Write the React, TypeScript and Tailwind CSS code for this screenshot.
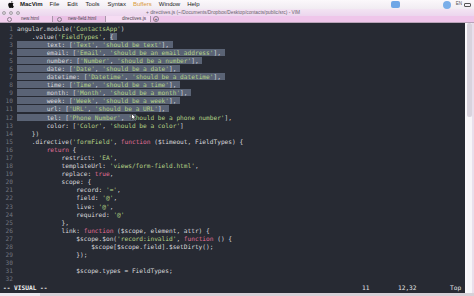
import React from "react";

const LINES: string[] = [
  "angular.module('ContactsApp')",
  "    .value('FieldTypes', {",
  "        text: ['Text', 'should be text'],",
  "        email: ['Email', 'should be an email address'],",
  "        number: ['Number', 'should be a number'],",
  "        date: ['Date', 'should be a date'],",
  "        datetime: ['Datetime', 'should be a datetime'],",
  "        time: ['Time', 'should be a time'],",
  "        month: ['Month', 'should be a month'],",
  "        week: ['Week', 'should be a week'],",
  "        url: ['URL', 'should be a URL'],",
  "        tel: ['Phone Number', 'should be a phone number'],",
  "        color: ['Color', 'should be a color']",
  "    })",
  "    .directive('formField', function ($timeout, FieldTypes) {",
  "        return {",
  "            restrict: 'EA',",
  "            templateUrl: 'views/form-field.html',",
  "            replace: true,",
  "            scope: {",
  "                record: '=',",
  "                field: '@',",
  "                live: '@',",
  "                required: '@'",
  "            },",
  "            link: function ($scope, element, attr) {",
  "                $scope.$on('record:invalid', function () {",
  "                    $scope[$scope.field].$setDirty();",
  "                });",
  "",
  "                $scope.types = FieldTypes;",
  "",
];

const DEF = "#d9d9dc";
const STR = "#b6d487";
const KW = "#e06f98";

function selFor(i: number, len: number): [number, number] | null {
  if (i === 1) return [25, 26];
  if (i >= 2 && i <= 10) return [0, len];
  if (i === 11) return [0, 31];
  return null;
}

function colorize(line: string): string[] {
  const colors: string[] = [];
  const re = /('[^']*'|\bfunction\b|\breturn\b|\btrue\b)/g;
  let last = 0;
  let m: RegExpExecArray | null;
  while ((m = re.exec(line))) {
    for (let k = last; k < m.index; k++) colors.push(DEF);
    const c = m[0].startsWith("'") ? STR : KW;
    for (let k = 0; k < m[0].length; k++) colors.push(c);
    last = m.index + m[0].length;
  }
  for (let k = last; k < line.length; k++) colors.push(DEF);
  return colors;
}

function CodeLine({ text, idx }: { text: string; idx: number }) {
  const sel = selFor(idx, text.length);
  let padded = text;
  if (sel && padded.length <= sel[1]) padded = padded.padEnd(sel[1] + 1, " ");
  const colors = colorize(text);
  const groups: { t: string; c: string; s: boolean }[] = [];
  for (let k = 0; k < padded.length; k++) {
    const c = colors[k] ?? DEF;
    const s = !!sel && k >= sel[0] && k <= sel[1];
    const g = groups[groups.length - 1];
    if (g && g.c === c && g.s === s) g.t += padded[k];
    else groups.push({ t: padded[k], c, s });
  }
  return (
    <div className="flex h-[8.1px] leading-[8.1px] whitespace-pre">
      <span className="w-[13px] text-right text-[#70757f]">{idx + 1}</span>
      <span className="w-[4px]" />
      <span>
        {groups.map((g, k) => (
          <span
            key={k}
            style={{ color: g.c }}
            className={g.s ? "bg-[#5a6375]" : ""}
          >
            {g.t}
          </span>
        ))}
      </span>
    </div>
  );
}

function Apple() {
  return (
    <svg width="6" height="7" viewBox="0 0 12 14">
      <path
        d="M9.8 7.4c0-1.8 1.5-2.6 1.5-2.7-.8-1.2-2.1-1.4-2.5-1.4-1.1-.1-2.1.6-2.6.6-.6 0-1.4-.6-2.3-.6C2.7 3.3 1.6 4 1 5.1c-1.3 2.2-.3 5.5.9 7.3.6.9 1.3 1.9 2.2 1.8.9 0 1.2-.6 2.3-.6s1.4.6 2.3.6c1 0 1.6-.9 2.1-1.8.7-1 1-2 1-2-.1 0-2-.8-2-3zM8 2.1c.5-.6.8-1.4.7-2.1-.7 0-1.5.5-2 1.1-.4.5-.8 1.3-.7 2.1.8 0 1.5-.4 2-1.1z"
        fill="#111"
      />
    </svg>
  );
}

function TabClose() {
  return (
    <span className="inline-block w-[5px] h-[5px] rounded-full border border-[#8a7f8c]" />
  );
}

export default function App() {
  const sans = { fontFamily: '"Liberation Sans", Arial, sans-serif' };
  return (
    <div className="w-[474px] h-[296px] overflow-hidden flex flex-col bg-[#f3eef4]" style={sans}>
      {/* menu bar */}
      <div className="h-[9px] flex items-center bg-gradient-to-b from-[#fbf8fb] to-[#f1ecf2] text-[6px] text-[#1a1a1a] pl-[8px]">
        <Apple />
        <span className="ml-[6px] font-bold">MacVim</span>
        <span className="ml-[7px]">File</span>
        <span className="ml-[8px]">Edit</span>
        <span className="ml-[8px]">Tools</span>
        <span className="ml-[8px]">Syntax</span>
        <span className="ml-[7px] text-[#d99a3a]">Buffers</span>
        <span className="ml-[7px]">Window</span>
        <span className="ml-[7px]">Help</span>
        <span className="flex-1" />
        <span className="w-[9px] h-[7px] rounded-[2px] bg-[#6fa6e6] mr-[43px]" />
        <span className="w-[8px] h-[8px] rounded-full bg-[#7aaee9] mr-[5px]" />
        <span className="text-[4.5px] text-[#555]">EN</span>
        <span className="ml-[2px] mr-[3px] w-[7px] h-[4px] border border-[#555] rounded-[1px]" />
      </div>
      {/* title bar */}
      <div className="h-[7px] flex items-center bg-gradient-to-b from-[#f3e4f3] to-[#ecd6ee] relative">
        <div className="flex gap-[3px] pl-[2px]">
          <span className="w-[4px] h-[4px] rounded-full bg-[#d8d0d8] border border-[#a8a0aa]" />
          <span className="w-[4px] h-[4px] rounded-full bg-[#d8d0d8] border border-[#a8a0aa]" />
          <span className="w-[4px] h-[4px] rounded-full bg-[#d8d0d8] border border-[#a8a0aa]" />
        </div>
        <span className="ml-[126px] text-[4.8px] text-[#6a626c] whitespace-nowrap">
          + directives.js (~/Documents/Dropbox/Desktop/contacts/public/src) - VIM
        </span>
      </div>
      {/* tab bar */}
      <div className="h-[7px] flex items-stretch bg-[#efc6ea] text-[4.6px] text-[#4a3f4c] border-b border-[#b9a3b8]">
        <div className="w-[53px] flex items-center pl-[7px] gap-[9px] border-r border-[#a895a8] bg-[#f2cfee]">
          <TabClose />
          <span>new.html</span>
        </div>
        <div className="w-[53px] flex items-center pl-[4px] gap-[6px] border-r border-[#a895a8] bg-[#eabfe5]">
          <TabClose />
          <span>new-field.html</span>
        </div>
        <div className="w-[45px] flex items-center pl-[3px] gap-[8px] border-r border-[#a895a8] bg-[#f6dcf3]">
          <span className="w-[5px]" />
          <span>directives.js</span>
        </div>
        <div className="flex items-center pl-[2px]">
          <span className="w-[6px] h-[6px] rounded-full border border-[#8a7f8c] flex items-center justify-center text-[5px] leading-none">+</span>
        </div>
      </div>
      {/* editor + scrollbar */}
      <div className="flex-1 flex min-h-0">
        <div
          className="w-[465px] bg-[#272a33] pt-[1.5px] text-[6.16px] relative"
          style={{ fontFamily: '"DejaVu Sans Mono", "Liberation Mono", monospace' }}
        >
          {LINES.map((l, i) => (
            <CodeLine key={i} text={l} idx={i} />
          ))}
          <div className="flex h-[8.1px] leading-[8.1px] whitespace-pre text-[#e4e4e6]">
            <span className="pl-[3px] w-[362px] font-bold text-[#f0f0f0]">-- VISUAL --</span>
            <span className="w-[36px]">11</span>
            <span className="w-[52px]">12,32</span>
            <span>Top</span>
          </div>
          <svg className="absolute left-[131px] top-[90px]" width="6" height="8" viewBox="0 0 6 8">
            <path d="M0.5 0.5 L0.5 6.5 L2 5.2 L3 7.5 L4 7 L3 4.8 L5 4.8 Z" fill="#fff" stroke="#111" strokeWidth="0.6" />
          </svg>
        </div>
        <div className="w-[9px] flex bg-[#f1ecf3]">
          <div className="w-[2px] bg-[#faf8fb]" />
          <div className="w-[5px] flex flex-col bg-[#f7f5f8]">
            <div className="h-[94px] bg-[#d9d3dd] rounded-[2px]" />
          </div>
          <div className="w-[2px] bg-[#e9dfec]" />
        </div>
      </div>
      {/* bottom strip */}
      <div className="h-[3px] flex bg-[#d6d0d7]">
        <div className="w-[40px] bg-[#ece8ee]" />
      </div>
    </div>
  );
}
